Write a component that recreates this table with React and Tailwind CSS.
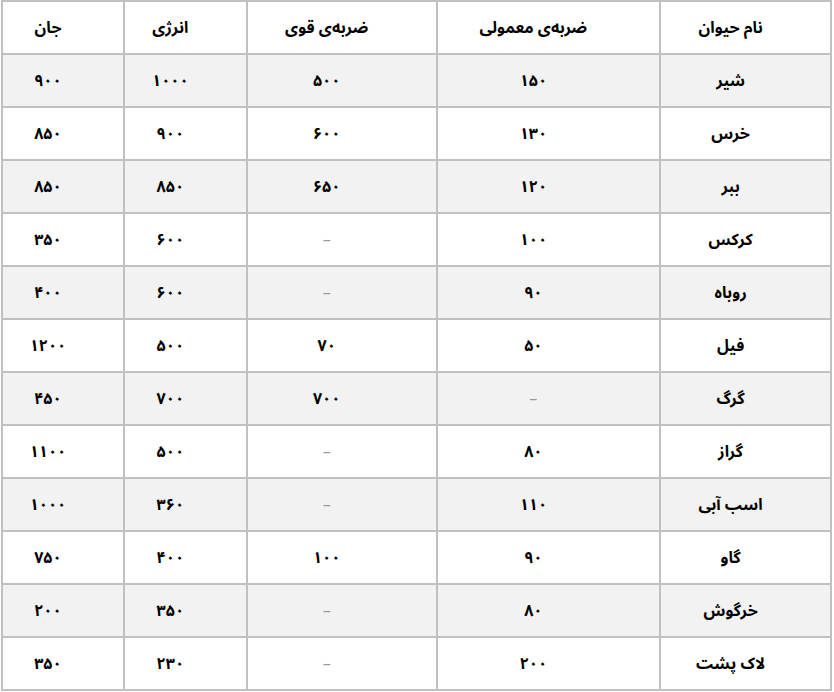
export default function App() {
  const rows = [
    ["شیر", "۱۵۰", "۵۰۰", "۱۰۰۰", "۹۰۰"],
    ["خرس", "۱۳۰", "۶۰۰", "۹۰۰", "۸۵۰"],
    ["ببر", "۱۲۰", "۶۵۰", "۸۵۰", "۸۵۰"],
    ["کرکس", "۱۰۰", "-", "۶۰۰", "۳۵۰"],
    ["روباه", "۹۰", "-", "۶۰۰", "۴۰۰"],
    ["فیل", "۵۰", "۷۰", "۵۰۰", "۱۲۰۰"],
    ["گرگ", "-", "۷۰۰", "۷۰۰", "۴۵۰"],
    ["گراز", "۸۰", "-", "۵۰۰", "۱۱۰۰"],
    ["اسب آبی", "۱۱۰", "-", "۳۶۰", "۱۰۰۰"],
    ["گاو", "۹۰", "۱۰۰", "۴۰۰", "۷۵۰"],
    ["خرگوش", "۸۰", "-", "۳۵۰", "۲۰۰"],
    ["لاک پشت", "۲۰۰", "-", "۲۳۰", "۳۵۰"],
  ];
  const heads = ["نام حیوان", "ضربه‌ی معمولی", "ضربه‌ی قوی", "انرژی", "جان"];
  const widths = ["w-[171px]", "w-[224px]", "w-[190px]", "w-[123px]", "w-[122px]"];

  return (
    <div className="w-[834px] h-[692px] bg-white overflow-hidden" style={{ fontFamily: '"Noto Sans Arabic", "Noto Sans", "DejaVu Sans", sans-serif' }}>
      <table dir="rtl" className="border-collapse w-[831px] ml-[1px] text-[16px] text-black font-bold">
        <thead>
          <tr className="h-[53px] bg-white">
            {heads.map((h, i) => (
              <th key={i} className={`${widths[i]} border-2 border-[#c0c0c0] text-center pr-[30px]`}>
                {h}
              </th>
            ))}
          </tr>
        </thead>
        <tbody>
          {rows.map((r, ri) => (
            <tr key={ri} className={`h-[53px] ${ri % 2 === 0 ? "bg-[#f2f2f2]" : "bg-white"}`}>
              {r.map((c, ci) => (
                <td
                  key={ci}
                  className={`border-2 border-[#c0c0c0] text-center pr-[30px] ${c === "-" ? "text-[#999999] font-normal" : ""}`}
                >
                  {c === "-" ? "–" : c}
                </td>
              ))}
            </tr>
          ))}
        </tbody>
      </table>
    </div>
  );
}
